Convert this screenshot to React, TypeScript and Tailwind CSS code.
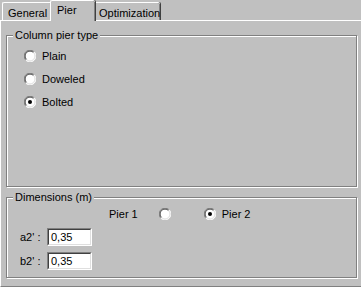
import React from "react";

function Radio({ checked }: { checked?: boolean }) {
  return (
    <svg width="12" height="12" viewBox="0 0 12 12" className="shrink-0">
      <circle cx="6" cy="6" r="5.5" fill="#fff" />
      <path d="M1.8 10.2 A5.5 5.5 0 0 1 10.2 1.8" fill="none" stroke="#808080" strokeWidth="1" />
      <path d="M10.2 1.8 A5.5 5.5 0 0 1 1.8 10.2" fill="none" stroke="#ffffff" strokeWidth="1" />
      <path d="M2.5 9.5 A4.5 4.5 0 0 1 9.5 2.5" fill="none" stroke="#404040" strokeWidth="1" />
      <path d="M9.5 2.5 A4.5 4.5 0 0 1 2.5 9.5" fill="none" stroke="#dfdfdf" strokeWidth="1" />
      {checked && <circle cx="6" cy="6" r="2" fill="#000" />}
    </svg>
  );
}

function Tab({ label, active, w }: { label: string; active?: boolean; w: string }) {
  return (
    <div
      className={
        active
          ? `relative z-10 -mx-[2px] mb-[-1px] h-[21px] ${w} bg-[#c0c0c0] border-l border-t border-white rounded-tl-[2px] rounded-tr-[2px] shadow-[inset_-1px_0_0_#808080,1px_0_0_#404040] pl-[6px] pt-[1px]`
          : `h-[18px] ${w} bg-[#c0c0c0] border-l border-t border-white rounded-tl-[2px] rounded-tr-[2px] shadow-[inset_-1px_0_0_#808080,1px_0_0_#404040] pl-[5px] pt-[2px]`
      }
    >
      {label}
    </div>
  );
}

function Group({ title, className, children }: { title: string; className: string; children: React.ReactNode }) {
  return (
    <div
      className={`relative border border-[#808080] shadow-[inset_1px_1px_0_#fff,1px_1px_0_#fff] ${className}`}
    >
      <span className="absolute left-[6px] top-[-8px] bg-[#c0c0c0] px-[2px] leading-[14px]">{title}</span>
      {children}
    </div>
  );
}

function Field({ label, value }: { label: string; value: string }) {
  return (
    <div className="flex items-center">
      <span className="w-[40px] pl-[13px] whitespace-nowrap">{label}</span>
      <div className="w-[45px] h-[18px] border border-[#808080] border-r-white border-b-white">
        <div className="h-full border border-[#404040] border-r-[#dfdfdf] border-b-[#dfdfdf] bg-white pl-[2px] leading-[14px]">
          {value}
        </div>
      </div>
    </div>
  );
}

export default function App() {
  return (
    <div className="w-[361px] h-[287px] overflow-hidden bg-[#c0c0c0] text-[11px] text-black font-['Liberation_Sans',Arial,sans-serif]">
      <div className="flex items-end h-[20px] pl-[2px]">
        <Tab label="General" w="w-[50px]" />
        <Tab label="Pier" active w="w-[45px]" />
        <Tab label="Optimization" w="w-[67px]" />
      </div>
      <div className="h-[267px] w-[364px] border-t border-l border-white border-b border-b-[#808080] pt-[14px] pl-[5px]">
        <Group title="Column pier type" className="w-[351px] h-[152px]">
          <div className="flex flex-col gap-[11px] pt-[14px] pl-[17px]">
            <label className="flex items-center gap-[6px] h-[12px]">
              <Radio />
              <span>Plain</span>
            </label>
            <label className="flex items-center gap-[6px] h-[12px]">
              <Radio />
              <span>Doweled</span>
            </label>
            <label className="flex items-center gap-[6px] h-[12px]">
              <Radio checked />
              <span>Bolted</span>
            </label>
          </div>
        </Group>
        <Group title="Dimensions (m)" className="mt-[10px] w-[351px] h-[81px]">
          <div className="flex items-center pt-[10px] pl-[102px] h-[22px]">
            <span>Pier 1</span>
            <span className="ml-[21px]"><Radio /></span>
            <span className="ml-[33px]"><Radio checked /></span>
            <span className="ml-[6px]">Pier 2</span>
          </div>
          <div className="flex flex-col gap-[6px] mt-[8px]">
            <Field label="a2' :" value="0,35" />
            <Field label="b2' :" value="0,35" />
          </div>
        </Group>
      </div>
    </div>
  );
}
